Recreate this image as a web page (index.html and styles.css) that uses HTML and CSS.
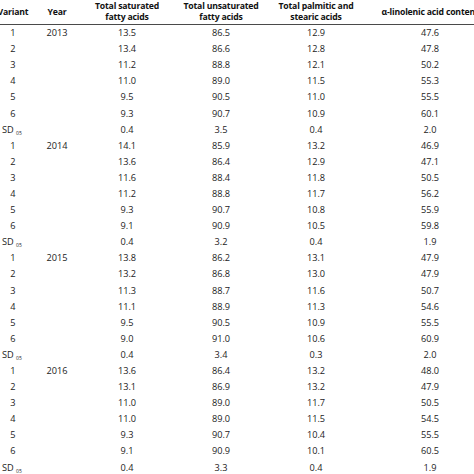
FILE: index.html
```html
<!DOCTYPE html>
<html>
<head>
<meta charset="utf-8">
<link rel="stylesheet" href="styles.css">
</head>
<body>
<div class="wrap">
<table class="data">
<colgroup>
<col class="c1"><col class="c2"><col class="c3"><col class="c4"><col class="c5"><col class="c6">
</colgroup>
<thead>
<tr>
<th class="variant">Variant</th>
<th>Year</th>
<th>Total saturated<br>fatty acids</th>
<th>Total unsaturated<br>fatty acids</th>
<th>Total palmitic and<br>stearic acids</th>
<th>α-linolenic acid content</th>
</tr>
</thead>
<tbody>
<tr><td>1</td><td>2013</td><td>13.5</td><td>86.5</td><td>12.9</td><td>47.6</td></tr>
<tr><td>2</td><td></td><td>13.4</td><td>86.6</td><td>12.8</td><td>47.8</td></tr>
<tr><td>3</td><td></td><td>11.2</td><td>88.8</td><td>12.1</td><td>50.2</td></tr>
<tr><td>4</td><td></td><td>11.0</td><td>89.0</td><td>11.5</td><td>55.3</td></tr>
<tr><td>5</td><td></td><td>9.5</td><td>90.5</td><td>11.0</td><td>55.5</td></tr>
<tr><td>6</td><td></td><td>9.3</td><td>90.7</td><td>10.9</td><td>60.1</td></tr>
<tr><td class="sd">SD <sub>05</sub></td><td></td><td>0.4</td><td>3.5</td><td>0.4</td><td>2.0</td></tr>
<tr><td>1</td><td>2014</td><td>14.1</td><td>85.9</td><td>13.2</td><td>46.9</td></tr>
<tr><td>2</td><td></td><td>13.6</td><td>86.4</td><td>12.9</td><td>47.1</td></tr>
<tr><td>3</td><td></td><td>11.6</td><td>88.4</td><td>11.8</td><td>50.5</td></tr>
<tr><td>4</td><td></td><td>11.2</td><td>88.8</td><td>11.7</td><td>56.2</td></tr>
<tr><td>5</td><td></td><td>9.3</td><td>90.7</td><td>10.8</td><td>55.9</td></tr>
<tr><td>6</td><td></td><td>9.1</td><td>90.9</td><td>10.5</td><td>59.8</td></tr>
<tr><td class="sd">SD <sub>05</sub></td><td></td><td>0.4</td><td>3.2</td><td>0.4</td><td>1.9</td></tr>
<tr><td>1</td><td>2015</td><td>13.8</td><td>86.2</td><td>13.1</td><td>47.9</td></tr>
<tr><td>2</td><td></td><td>13.2</td><td>86.8</td><td>13.0</td><td>47.9</td></tr>
<tr><td>3</td><td></td><td>11.3</td><td>88.7</td><td>11.6</td><td>50.7</td></tr>
<tr><td>4</td><td></td><td>11.1</td><td>88.9</td><td>11.3</td><td>54.6</td></tr>
<tr><td>5</td><td></td><td>9.5</td><td>90.5</td><td>10.9</td><td>55.5</td></tr>
<tr><td>6</td><td></td><td>9.0</td><td>91.0</td><td>10.6</td><td>60.9</td></tr>
<tr><td class="sd">SD <sub>05</sub></td><td></td><td>0.4</td><td>3.4</td><td>0.3</td><td>2.0</td></tr>
<tr><td>1</td><td>2016</td><td>13.6</td><td>86.4</td><td>13.2</td><td>48.0</td></tr>
<tr><td>2</td><td></td><td>13.1</td><td>86.9</td><td>13.2</td><td>47.9</td></tr>
<tr><td>3</td><td></td><td>11.0</td><td>89.0</td><td>11.7</td><td>50.5</td></tr>
<tr><td>4</td><td></td><td>11.0</td><td>89.0</td><td>11.5</td><td>54.5</td></tr>
<tr><td>5</td><td></td><td>9.3</td><td>90.7</td><td>10.4</td><td>55.5</td></tr>
<tr><td>6</td><td></td><td>9.1</td><td>90.9</td><td>10.1</td><td>60.5</td></tr>
<tr><td class="sd">SD <sub>05</sub></td><td></td><td>0.4</td><td>3.3</td><td>0.4</td><td>1.9</td></tr>
</tbody>
</table>
</div>
</body>
</html>
```
FILE: styles.css
```css
html, body {
  margin: 0;
  padding: 0;
  background: #ffffff;
  overflow: hidden;
}
.wrap {
  width: 474px;
  height: 474px;
  overflow: hidden;
}
.data {
  margin-left: -6px;
  border-collapse: collapse;
  table-layout: fixed;
  width: 504px;
  font-family: "Open Sans", "Noto Sans", sans-serif;
  color: #1c1c1c;
}
.c1 { width: 38px; }
.c2 { width: 50px; }
.c3 { width: 90px; }
.c4 { width: 98px; }
.c5 { width: 92px; }
.c6 { width: 136px; }
.data th {
  height: 24px;
  padding: 0;
  font-size: 8.7px;
  line-height: 11px;
  font-weight: 700;
  letter-spacing: -0.2px;
  color: #111111;
  text-align: center;
  vertical-align: middle;
  border-bottom: 1.5px solid #4a4a4a;
  white-space: nowrap;
}
.data td {
  height: 16.1px;
  padding: 0;
  font-size: 9.2px;
  line-height: 16px;
  text-align: center;
  vertical-align: middle;
  white-space: nowrap;
}
.data td.sd {
  text-align: left;
  padding-left: 8px;
}
.data sub {
  font-size: 5px;
  vertical-align: -2px;
  line-height: 0;
}
```
